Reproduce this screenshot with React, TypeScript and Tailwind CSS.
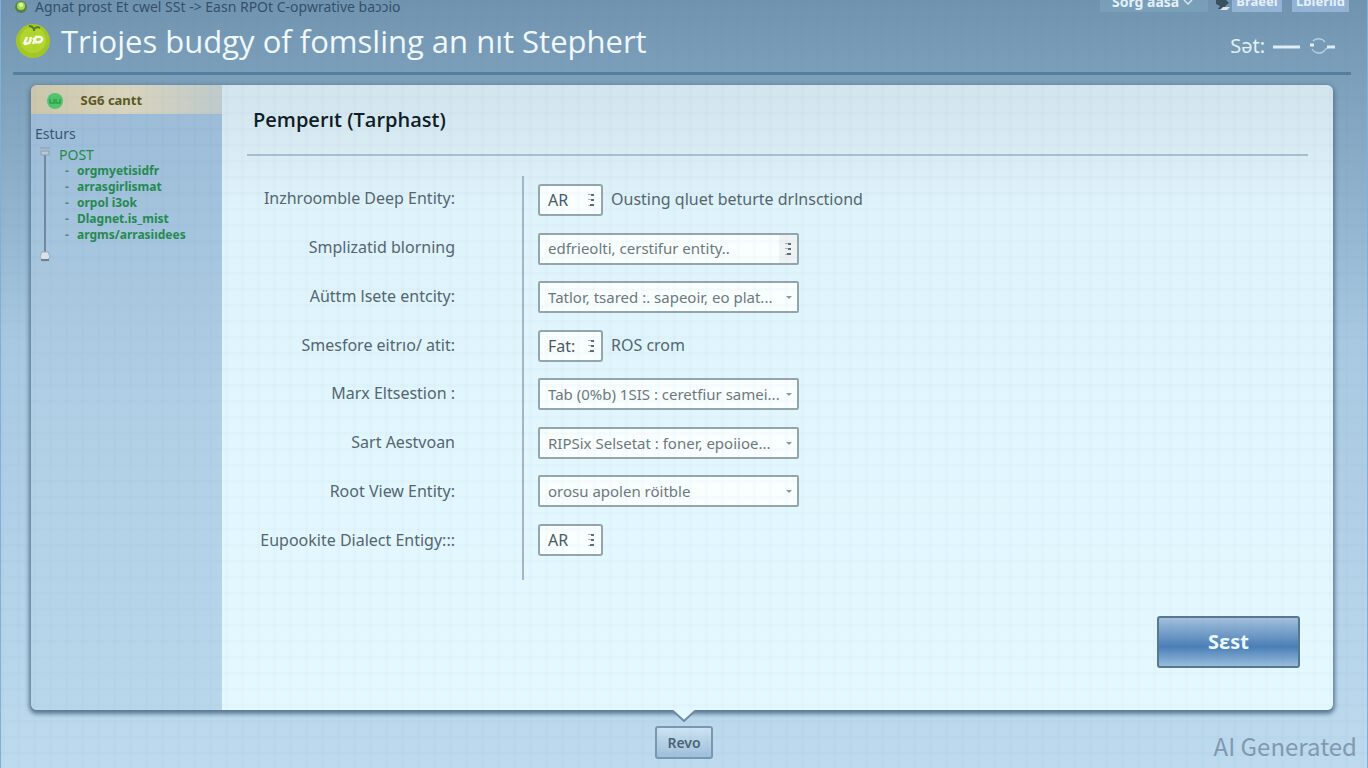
import React, { useState } from "react";

type Field = {
  id: string;
  label: string;
  value: string;
  kind: "short" | "wide" | "list";
  hint?: string;
};

const fields: Field[] = [
  { id: "deep", label: "Inzhroomble Deep Entity:", value: "AR", kind: "short", hint: "Ousting qluet beturte drlnsctiond" },
  { id: "informing", label: "Smplizatid blorning", value: "edfrieolti, cerstifur entity..", kind: "list" },
  { id: "attribute", label: "Aüttm lsete entcity:", value: "Tatlor, tsared :. sapeoir, eo plat...", kind: "wide" },
  { id: "store", label: "Smesfore eitrıo/ atit:", value: "Fat:", kind: "short", hint: "ROS crom" },
  { id: "max", label: "Marx Eltsestion :", value: "Tab (0%b) 1SIS : ceretfiur samei...", kind: "wide" },
  { id: "sort", label: "Sart Aestvoan", value: "RIPSix Selsetat : foner, epoiioe...", kind: "wide" },
  { id: "root", label: "Root View Entity:", value: "orosu apolen röitble", kind: "wide" },
  { id: "dialect", label: "Eupookite Dialect Entigy:::", value: "AR", kind: "short" },
];

const treeItems = ["orgmyetisidfr", "arrasgirlismat", "orpol i3ok", "Dlagnet.is_mist", "argms/arrasiıdees"];

function DotsIcon() {
  return (
    <svg width="12" height="18" viewBox="0 0 12 18" aria-hidden="true">
      <g fill="#5d6d76">
        <rect x="6" y="3" width="3" height="2" />
        <rect x="6" y="8" width="3" height="2" />
        <rect x="5" y="13" width="4" height="2" />
      </g>
      <g fill="#a9b5ba">
        <rect x="3" y="3" width="3" height="1" />
        <rect x="3" y="8" width="3" height="1" />
        <rect x="3" y="14" width="2" height="1" />
      </g>
    </svg>
  );
}

function SelectField({ field }: { field: Field }) {
  const [value, setValue] = useState(field.value);
  const short = field.kind === "short";

  return (
    <div className={short ? "relative w-[65px] shrink-0" : "relative w-[261px] shrink-0"}>
      <select
        id={field.id}
        value={value}
        onChange={(e) => setValue(e.target.value)}
        className={
          short
            ? "block h-8 w-full appearance-none rounded-[3px] border-2 border-[#94a6ad] bg-[#f9fefe] pl-2 text-base text-[#4b5a64]"
            : "block h-8 w-full appearance-none rounded-[2px] border-2 border-[#94a6ad] bg-[#f9fefe] pl-2 text-[15px] text-[#6d787d]"
        }
      >
        <option>{field.value}</option>
      </select>
      {field.kind === "wide" ? (
        <svg className="pointer-events-none absolute top-3.5 right-1.5" width="8" height="5" viewBox="0 0 8 5" aria-hidden="true">
          <path d="M1 1h6L4 4z" fill="#8b999f" />
        </svg>
      ) : (
        <span
          className={
            short
              ? "pointer-events-none absolute top-[7px] right-1.5"
              : "pointer-events-none absolute top-0.5 right-0.5 flex h-7 w-[18px] items-center justify-center bg-[#eef3f4]"
          }
        >
          <DotsIcon />
        </span>
      )}
    </div>
  );
}

function Header() {
  return (
    <header className="mx-3">
      <div className="flex h-3.5 items-start justify-between">
        <nav className="flex items-center text-[14px] leading-[14px] text-[#34506a]">
          <svg className="mr-1.5" width="16" height="14" viewBox="0 0 16 14" aria-hidden="true">
            <circle cx="8" cy="7" r="6" fill="#587f50" />
            <circle cx="8" cy="6" r="4" fill="#a5df4a" />
            <circle cx="8" cy="5" r="2" fill="#e2ffab" />
          </svg>
          <a href="#">Agnat prost Et cwel SSt -&gt; Easn RPOt C-opwrative baɔɔio</a>
        </nav>
        <div className="-mt-3 flex text-[13px] font-bold text-[#e6f2f9]">
          <button className="flex h-6 w-[108px] items-start bg-[#7a9fb8] pt-0.5 pl-3 text-sm leading-6">
            Sorg åasa
            <svg className="mt-2 ml-1" width="10" height="8" viewBox="0 0 10 8" fill="none" stroke="#dceaf3" strokeWidth="1.500" aria-hidden="true">
              <path d="M1 2l4 4 4-4" />
            </svg>
          </button>
          <svg className="ml-1.5" width="18" height="24" viewBox="0 0 18 24" aria-hidden="true">
            <path d="M2 12h10l3 3-4 3 2 3H4l2-3-4-2z" fill="#39505f" />
            <path d="M9 19h7l-3 3H6z" fill="#dbe6ec" />
          </svg>
          <button className="h-6 w-[50px] bg-[#94b4d6] pt-0.5 leading-5">Braeeı</button>
          <button className="mr-1.5 ml-2.5 h-6 w-[57px] bg-[#94b4d6] pt-0.5 leading-5">Lbieriid</button>
        </div>
      </div>

      <div className="flex h-[58px] items-center justify-between pb-1">
        <div className="flex items-center gap-2.5">
          <svg width="38" height="38" viewBox="0 0 38 38" aria-hidden="true">
            <circle cx="20" cy="19" r="17" fill="#a3c726" />
            <circle cx="20" cy="18" r="13" fill="#b3d62c" />
            <path d="M16 4q3 0 5 3 3-3 6-1M21 7v2" fill="none" stroke="#5c7a2a" strokeWidth="2" />
            <path d="M11 22l3-7M18 15l-2 7M11 22q5 0 7-4M20 22l3-7q7-1 6 3-1 3-7 2M20 16l4 5" fill="none" stroke="#f6fbe6" strokeWidth="2.500" />
          </svg>
          <h1 className="font-['Open_Sans',sans-serif] text-[31px] leading-10 text-[#f1f9fe]">
            Triojes budgy of fomsling an nıt Stephert
          </h1>
        </div>
        <div className="mr-[18px] flex items-center gap-2 pt-2.5 text-xl text-[#e4f1f8]">
          <span>Sət:</span>
          <svg width="64" height="24" viewBox="0 0 64 24" fill="none" stroke="#e0eef6" aria-hidden="true">
            <path d="M0 13h27" strokeWidth="3" />
            <path d="M40 7a8 8 0 0 1 12 1M39 15a8 8 0 0 0 11 3l4-4" stroke="#b5cfe0" strokeWidth="1.500" />
            <path d="M37 11h4M54 13h8" strokeWidth="3" />
          </svg>
        </div>
      </div>
      <hr className="mr-1 border-0 border-b-[3px] border-[#557f9f]" />
    </header>
  );
}

function Sidebar() {
  return (
    <aside className="w-[191px] shrink-0 rounded-l-md bg-linear-to-b from-[#9bbad6] via-[#b0cfe5] to-[#b9d7eb] text-[13px]">
      <div className="flex h-[29px] items-center gap-2 rounded-tl-md bg-linear-to-r from-[#cbc7ac] via-[#d9d4bd] to-[#bfcacb] pt-0.5 pl-3.5">
        <svg width="20" height="18" viewBox="0 0 20 18" aria-hidden="true">
          <circle cx="10" cy="9" r="8" fill="#50c56a" />
          <path d="M5 7v4h4V7M11 7v4h4V7" fill="none" stroke="#309d50" strokeWidth="1.500" />
        </svg>
        <span className="-mr-1 text-[#c9dfa6]">:</span>
        <span className="font-bold text-[#5c5822]">SG6 cantt</span>
      </div>

      <div className="px-1 pt-3">
        <h2 className="text-sm leading-4 text-[#35566f]">Esturs</h2>
        <div className="flex pt-1">
          <svg className="shrink-0" width="20" height="122" viewBox="0 0 20 122" aria-hidden="true">
            <path d="M10 8v98" stroke="#7388a0" strokeWidth="2" />
            <path d="M5 2h10M6 5h8v4H6z" fill="#bcc8cf" stroke="#8c9cab" />
            <path d="M7 106h6l2 5-3 4H8l-3-4z" fill="#dde2e6" stroke="#a3afb9" />
            <path d="M6 114h8" stroke="#6f7f8c" strokeWidth="2" />
          </svg>
          <ul className="text-[#258a50]">
            <li className="pl-1 text-sm leading-[17px]">POST</li>
            {treeItems.map((item) => (
              <li key={item} className="flex items-center gap-1 pl-2.5 text-xs leading-4 font-bold">
                <span className="w-2 text-[#4c8d84]">-</span>
                <a href="#">{item}</a>
              </li>
            ))}
          </ul>
        </div>
      </div>
    </aside>
  );
}

export default function App() {
  return (
    <div className="relative min-h-screen overflow-hidden border-x border-[#7fb0d8] bg-linear-to-b from-[#7094b0] via-[#a9c9e2] via-45% to-[#bddaee] font-['Noto_Sans','Open_Sans',sans-serif]">
      <Header />

      <div className="mt-2.5 mr-[34px] ml-[30px] flex rounded-md shadow-[0_2px_4px_2px_#5b7a92]">
        <Sidebar />

        <main className="flex min-w-0 flex-1 flex-col rounded-r-md bg-linear-to-b from-[#d2e4ec] via-[#dff3fb] via-20% to-[#e4f9ff] px-[25px] pb-[42px]">
          <h2 className="px-1.5 pt-5 pb-5 font-['Open_Sans',sans-serif] text-xl leading-[29px] font-semibold text-[#101c26]">
            Pemperıt (Tarphast)
          </h2>
          <hr className="border-0 border-b-2 border-[#a3bfd2]" />

          <form className="flex flex-col" onSubmit={(e) => e.preventDefault()}>
            <div className="mt-5 flex h-[404px]">
              <div className="flex w-[277px] flex-col justify-between border-r-2 border-[#a0b7c9] pt-1.5 pr-[67px] pb-6 text-right text-base text-[#54666f]">
                {fields.map((field) => (
                  <label key={field.id} htmlFor={field.id} className="block leading-8 whitespace-nowrap">
                    {field.label}
                  </label>
                ))}
              </div>
              <div className="flex flex-col justify-between pt-2 pb-6 pl-3.5">
                {fields.map((field) => (
                  <div key={field.id} className="flex h-8 items-start gap-2">
                    <SelectField field={field} />
                    {field.hint && <span className="text-base leading-[30px] whitespace-nowrap text-[#54666f]">{field.hint}</span>}
                  </div>
                ))}
              </div>
            </div>

            <button
              type="submit"
              className="mt-9 mr-2 h-[52px] w-[143px] self-end rounded-[3px] border-2 border-[#58788f] bg-linear-to-b from-[#a3c0dc] via-[#4a7fb6] via-60% to-[#98bddd] text-xl font-bold text-[#eefaff]"
            >
              Sɛst
            </button>
          </form>
        </main>
      </div>

      <footer className="flex flex-col items-center pb-1.5">
        <svg className="relative z-10" width="24" height="12" viewBox="0 0 24 12" aria-hidden="true">
          <path d="M0 0h24L12 11z" fill="#e4f9ff" />
          <path d="M0 0l12 11L24 0" fill="none" stroke="#6d8aa0" strokeWidth="2" />
        </svg>
        <button className="mt-1 h-[33px] w-[58px] rounded-[3px] border-2 border-[#7898b2] bg-linear-to-b from-[#cde3f2] to-[#9fc0da] text-sm font-semibold text-[#4c6378]">
          Revo
        </button>
      </footer>

      {/* faint woven grid over the whole page */}
      <div className="pointer-events-none absolute inset-0 bg-[linear-gradient(rgba(50,100,140,0.02)_2px,transparent_4px),linear-gradient(90deg,rgba(50,100,140,0.02)_2px,transparent_4px)] bg-size-[16px_16px]" />

      <p className="absolute right-2.5 bottom-1.5 font-['Noto_Sans_CJK_SC',sans-serif] text-2xl text-[#8199ae]">AI Generated</p>
    </div>
  );
}
